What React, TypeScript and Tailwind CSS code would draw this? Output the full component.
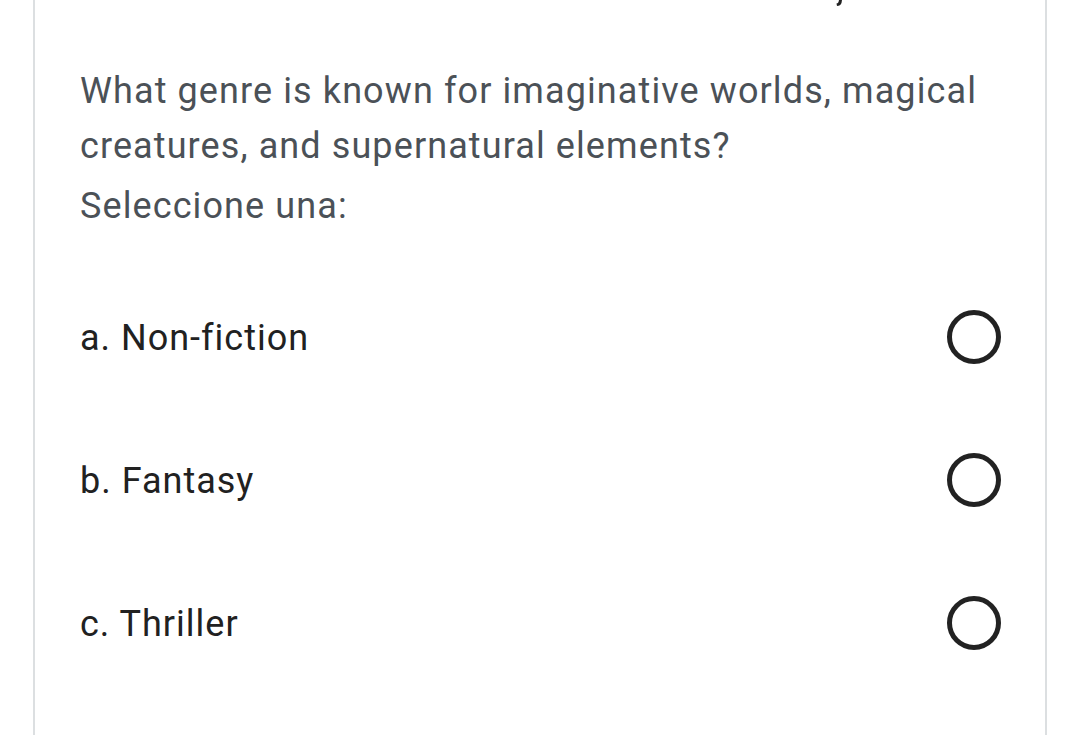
import React from "react";

const options = ["a. Non-fiction", "b. Fantasy", "c. Thriller"];

export default function App() {
  return (
    <div className="w-[1080px] h-[735px] bg-white overflow-hidden" style={{ fontFamily: "Roboto, 'Noto Sans', sans-serif" }}>
      <div className="relative ml-[33px] w-[1014px] h-[735px] border-x-2 border-[#dcdfe1] pl-[45px] pr-[44px] pt-[64px]">
        <svg className="absolute left-[798px] top-0" width="12" height="8" viewBox="0 0 12 8">
          <path d="M6 0 L9 0 L8.5 3 Q7.5 6 4 6 L3.5 3.5 Q5.5 3.5 6 0 Z" fill="#222" />
        </svg>
        <p className="text-[36px] leading-[55px] text-[#4b5157] tracking-[1.1px]">
          What genre is known for imaginative worlds, magical creatures, and supernatural elements?
        </p>
        <p className="mt-[5px] text-[36px] leading-[55px] text-[#4b5157] tracking-[1.1px]">Seleccione una:</p>
        <div className="mt-[31px] flex flex-col">
          {options.map((o) => (
            <div key={o} className="h-[143px] flex items-center justify-between">
              <span className="pt-[4px] text-[36px] leading-[55px] text-[#212121] tracking-[1px]">{o}</span>
              <span className="w-[54px] h-[54px] rounded-full border-[5px] border-[#222222]" />
            </div>
          ))}
        </div>
      </div>
    </div>
  );
}
